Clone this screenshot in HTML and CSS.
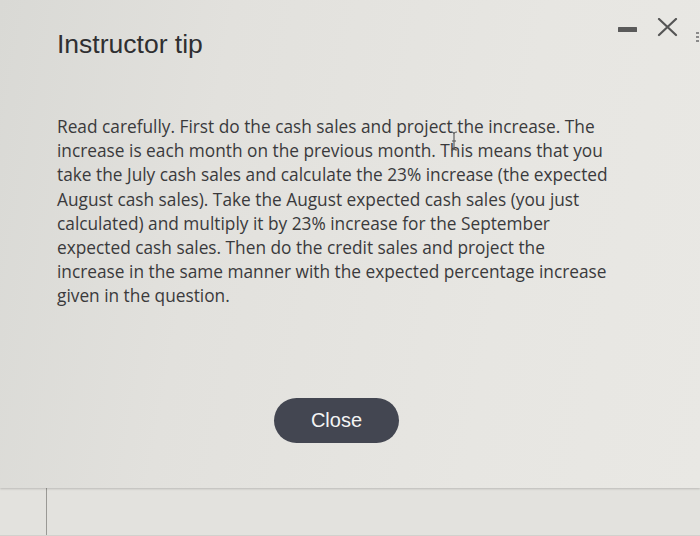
FILE: index.html
```html
<!DOCTYPE html>
<html lang="en">
<head>
<meta charset="utf-8">
<title>Instructor tip</title>
<link rel="stylesheet" href="styles.css">
</head>
<body>
<div class="dialog">
  <div class="header">
    <h1 class="title">Instructor tip</h1>
    <div class="controls">
      <svg class="ctrl" width="60" height="20" viewBox="0 0 60 20" aria-hidden="true">
        <rect x="0" y="9" width="19" height="5" rx="0.5" fill="#5a5a5a"/>
        <path d="M41 1 L58 17 M58 1 L41 17" stroke="#555" stroke-width="2.2" stroke-linecap="round" fill="none"/>
      </svg>
    </div>
  </div>
  <div class="content">
    <p class="tip">Read carefully. First do the cash sales and project the increase. The increase is each month on the previous month. This means that you take the July cash sales and calculate the 23% increase (the expected August cash sales). Take the August expected cash sales (you just calculated) and multiply it by 23% increase for the September expected cash sales. Then do the credit sales and project the increase in the same manner with the expected percentage increase given in the question.</p>
    <div class="footer">
      <button class="close-btn" type="button">Close</button>
    </div>
  </div>
  <svg class="cursor" width="8" height="20" viewBox="0 0 8 20" aria-hidden="true">
    <path d="M1 1 Q4 1 4 3 L4 17 Q4 19 1 19 M7 1 Q4 1 4 3 M4 17 Q4 19 7 19 M2 10 L6 10" stroke="#555" stroke-width="1.1" fill="none"/>
  </svg>
  <div class="edge-dots"><span></span><span></span><span></span></div>
</div>
<div class="below">
  <div class="below-col"></div>
  <div class="below-main"></div>
</div>
</body>
</html>
```

FILE: styles.css
```css
html, body {
  margin: 0;
  padding: 0;
}

body {
  width: 700px;
  height: 536px;
  overflow: hidden;
  background: #e2e1dd;
  font-family: "Open Sans", "Liberation Sans", sans-serif;
}

.dialog {
  position: relative;
  box-sizing: border-box;
  height: 488px;
  padding: 18px 22px 0 57px;
  background: linear-gradient(100deg, #d9d9d5 0%, #e2e1dd 30%, #e7e6e2 70%, #e9e8e4 100%);
  box-shadow: 0 1px 2px rgba(0, 0, 0, 0.18);
  z-index: 1;
}

.header {
  display: flex;
  justify-content: space-between;
  align-items: flex-start;
}

.title {
  margin: 11px 0 0;
  font-family: "Liberation Sans", Arial, sans-serif;
  font-weight: normal;
  font-size: 26.5px;
  line-height: 30px;
  color: #2f2f31;
}

.controls {
  display: flex;
}

.ctrl {
  display: block;
}

.content {
  width: 556px;
  display: flex;
  flex-direction: column;
}

.tip {
  margin: 56px 0 0;
  font-size: 17.3px;
  line-height: 24.2px;
  color: #3a3a3c;
}

.footer {
  display: flex;
  justify-content: center;
  margin-top: 89px;
  padding-left: 3px;
}

.close-btn {
  width: 125px;
  height: 45px;
  border: none;
  border-radius: 23px;
  background: #434651;
  color: #f4f4f4;
  font-family: "Liberation Sans", Arial, sans-serif;
  font-size: 20px;
  padding: 0;
  cursor: pointer;
}

.cursor {
  position: absolute;
  left: 450px;
  top: 131px;
}

.edge-dots {
  position: absolute;
  right: 1px;
  top: 32px;
  display: flex;
  flex-direction: column;
  gap: 2px;
}

.edge-dots span {
  width: 3px;
  height: 2px;
  background: #8a8a8a;
}

.below {
  display: flex;
  height: 48px;
  background: #e3e2de;
  border-bottom: 1px solid #d2d1cd;
  box-sizing: border-box;
}

.below-col {
  width: 46px;
  border-right: 1px solid #9a9995;
}

.below-main {
  flex: 1;
}
```
